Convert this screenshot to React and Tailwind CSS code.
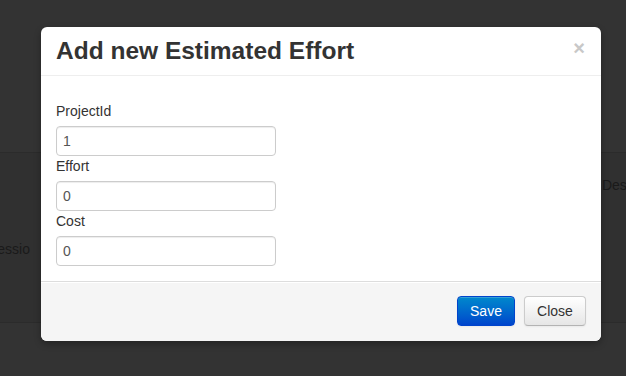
import React from "react";

export default function App() {
  return (
    <div
      className="relative w-[626px] h-[376px] overflow-hidden bg-[#333333]"
      style={{ fontFamily: '"Liberation Sans", Arial, sans-serif' }}
    >
      {/* background page */}
      <div className="h-[152px]" />
      <div className="flex h-[171px] border-y border-[#2b2b2b] bg-[#303030] text-[14px] text-[#1a1a1a]">
        <div className="ml-[-37px] mt-[86px] leading-[20px]">Progressio</div>
        <div className="flex-1" />
        <div className="mr-[-46px] mt-[22px] leading-[20px] whitespace-nowrap">Description</div>
      </div>

      {/* modal */}
      <div className="absolute left-[41px] top-[27px] w-[560px] rounded-[6px] bg-white shadow-[0_3px_7px_rgba(0,0,0,0.3)] overflow-hidden">
        <div className="flex items-center justify-between h-[49px] px-[15px] border-b border-[#eeeeee]">
          <h3 className="text-[24.5px] font-bold leading-[30px] text-[#333333]">
            Add new Estimated Effort
          </h3>
          <span className="text-[20px] font-bold leading-[20px] text-[#c8c8c8] mr-[1px] -mt-[6px]">×</span>
        </div>
        <div className="px-[15px] pt-[25px] pb-[15px] text-[14px] text-[#333333]">
          {[
            ["ProjectId", "1"],
            ["Effort", "0"],
            ["Cost", "0"],
          ].map(([label, value]) => (
            <div key={label}>
              <div className="leading-[20px] mb-[5px]">{label}</div>
              <div className="w-[220px] h-[30px] rounded-[4px] border border-[#cccccc] shadow-[inset_0_1px_1px_rgba(0,0,0,0.075)] px-[6px] flex items-center text-[14px] text-[#555555]">
                {value}
              </div>
            </div>
          ))}
        </div>
        <div className="flex justify-end gap-[9px] bg-[#f5f5f5] border-t border-[#dddddd] pt-[14px] pb-[15px] px-[15px] shadow-[inset_0_1px_0_#ffffff]">
          <button className="w-[58px] h-[30px] rounded-[4px] border border-[#0044cc] bg-gradient-to-b from-[#0088cc] to-[#0044cc] text-white text-[14px] leading-[20px] shadow-[inset_0_1px_0_rgba(255,255,255,0.2),0_1px_2px_rgba(0,0,0,0.05)]">
            Save
          </button>
          <button className="w-[62px] h-[30px] rounded-[4px] border border-[#cccccc] border-b-[#b3b3b3] bg-gradient-to-b from-[#ffffff] to-[#e6e6e6] text-[#333333] text-[14px] leading-[20px] shadow-[inset_0_1px_0_rgba(255,255,255,0.2),0_1px_2px_rgba(0,0,0,0.05)]">
            Close
          </button>
        </div>
      </div>
    </div>
  );
}
